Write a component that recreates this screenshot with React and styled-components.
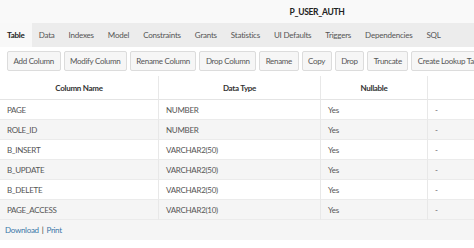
import React from "react";
import styled, { createGlobalStyle } from "styled-components";

const Global = createGlobalStyle`
  html, body { margin: 0; padding: 0; background: #ffffff; overflow: hidden; }
  body { font-family: Lato, "Open Sans", sans-serif; }
`;

const Page = styled.div`
  width: 634px;
  background: #ffffff;
  font-family: Lato, "Open Sans", sans-serif;
  font-size: 8px;
  letter-spacing: -0.3px;
  color: #444;
`;

const TitleBar = styled.div`
  height: 23px;
  display: flex;
  align-items: center;
  justify-content: center;
  background: #f9f9f9;
  font-weight: 700;
  font-size: 8.5px;
  color: #222;
`;

const Tabs = styled.div`
  display: flex;
  height: 24px;
  background: #ececec;
`;

const Tab = styled.div`
  display: flex;
  align-items: center;
  padding: 0 7px;
  letter-spacing: -0.22px;
  background: ${(p) => (p.$active ? "#f8f8f8" : "transparent")};
  font-weight: ${(p) => (p.$active ? 700 : 400)};
  color: ${(p) => (p.$active ? "#222" : "#555")};
  white-space: nowrap;
`;

const Toolbar = styled.div`
  display: flex;
  gap: 3px;
  padding: 4px 7px 5px;
  white-space: nowrap;
`;

const Button = styled.div`
  display: flex;
  align-items: center;
  height: 18px;
  padding: 0 5.5px;
  border: 1px solid #dcdcdc;
  border-radius: 2px;
  background: #f6f6f6;
  color: #555;
  white-space: nowrap;
  flex: none;
`;

const Table = styled.div`
  display: grid;
  grid-template-columns: 158px 162px 107px 1fr;
`;

const HeadCell = styled.div`
  height: 23px;
  display: flex;
  align-items: center;
  justify-content: center;
  font-weight: 700;
  color: #333;
  border-bottom: 1px solid #e4e4e4;
  border-left: ${(p) => (p.$first ? "none" : "1px solid #e8e8e8")};
`;

const Cell = styled.div`
  height: 19px;
  display: flex;
  align-items: center;
  padding-left: 7px;
  color: #555;
  background: ${(p) => (p.$odd ? "#f5f5f5" : "#ffffff")};
  border-bottom: 1px solid #ebebeb;
  border-left: ${(p) => (p.$first ? "none" : "1px solid #e8e8e8")};
`;

const Footer = styled.div`
  height: 20px;
  display: flex;
  align-items: center;
  padding-left: 5px;
  background: #f5f5f5;
  gap: 3px;
`;

const Link = styled.a`
  color: #3a77a8;
  text-decoration: none;
`;

const Sep = styled.span`
  color: #333;
`;

const tabs = [
  "Table",
  "Data",
  "Indexes",
  "Model",
  "Constraints",
  "Grants",
  "Statistics",
  "UI Defaults",
  "Triggers",
  "Dependencies",
  "SQL",
];

const buttons = [
  "Add Column",
  "Modify Column",
  "Rename Column",
  "Drop Column",
  "Rename",
  "Copy",
  "Drop",
  "Truncate",
  "Create Lookup Table",
];

const rows = [
  ["PAGE", "NUMBER"],
  ["ROLE_ID", "NUMBER"],
  ["B_INSERT", "VARCHAR2(50)"],
  ["B_UPDATE", "VARCHAR2(50)"],
  ["B_DELETE", "VARCHAR2(50)"],
  ["PAGE_ACCESS", "VARCHAR2(10)"],
];

export default function App() {
  return (
    <>
      <Global />
      <Page>
        <TitleBar>P_USER_AUTH</TitleBar>
        <Tabs>
          {tabs.map((t, i) => (
            <Tab key={t} $active={i === 0}>
              {t}
            </Tab>
          ))}
        </Tabs>
        <Toolbar>
          {buttons.map((b) => (
            <Button key={b}>{b}</Button>
          ))}
        </Toolbar>
        <Table>
          <HeadCell $first>Column Name</HeadCell>
          <HeadCell>Data Type</HeadCell>
          <HeadCell>Nullable</HeadCell>
          <HeadCell>Default</HeadCell>
          {rows.map(([name, type], i) => (
            <React.Fragment key={name}>
              <Cell $first $odd={i % 2 === 1}>{name}</Cell>
              <Cell $odd={i % 2 === 1}>{type}</Cell>
              <Cell $odd={i % 2 === 1}>Yes</Cell>
              <Cell $odd={i % 2 === 1}>-</Cell>
            </React.Fragment>
          ))}
        </Table>
        <Footer>
          <Link href="#">Download</Link>
          <Sep>|</Sep>
          <Link href="#">Print</Link>
        </Footer>
      </Page>
    </>
  );
}
